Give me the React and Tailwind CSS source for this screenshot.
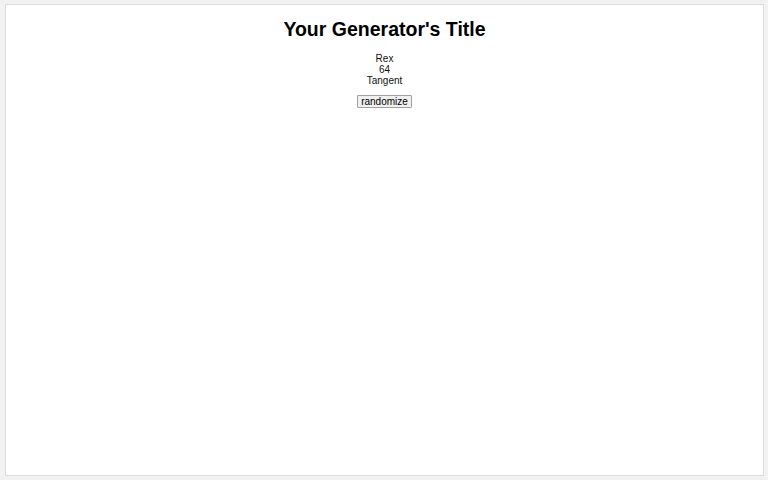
import React, { useState } from 'react';

const options = [
  ['Rex', 'Max', 'Luna', 'Bella'],
  ['64', '12', '37', '99'],
  ['Tangent', 'Sine', 'Cosine', 'Secant'],
];

export default function App() {
  const [picks, setPicks] = useState([0, 0, 0]);

  const randomize = () => {
    setPicks(options.map((list) => Math.floor(Math.random() * list.length)));
  };

  return (
    <div className="h-[480px] w-[768px] bg-[#f2f2f2] pt-[4px] pb-[4px] pl-[5px] pr-[4px]" style={{ fontFamily: '"Liberation Sans", Arial, sans-serif' }}>
      <div className="h-[472px] bg-white border border-[#dcdcdc] flex flex-col items-center">
        <h1 className="mt-[12px] text-[19.5px] leading-[24px] font-bold text-black">Your Generator's Title</h1>
        <div className="mt-[12px] flex flex-col items-center text-[10px] leading-[11px] text-[#111]">
          {options.map((list, i) => (
            <div key={i}>{list[picks[i]]}</div>
          ))}
        </div>
        <button
          onClick={randomize}
          className="mt-[9px] px-[3px] h-[13px] text-[10px] leading-[11px] text-black bg-[#f0f0f0] border border-[#a0a0a0] rounded-[1px]"
        >
          randomize
        </button>
      </div>
    </div>
  );
}
